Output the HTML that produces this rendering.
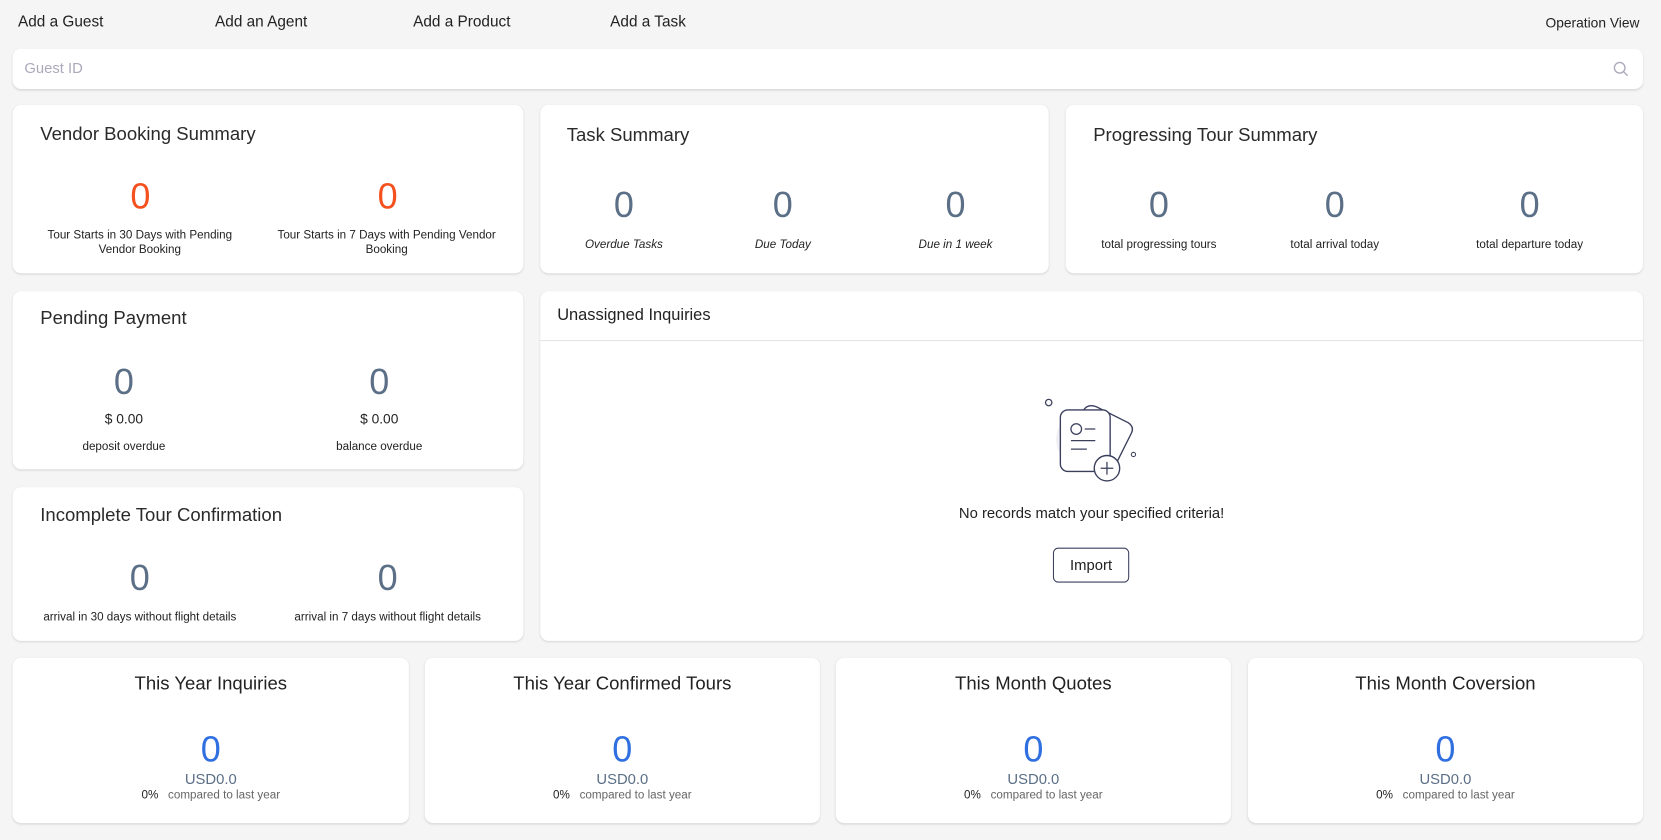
<!DOCTYPE html>
<html><head><meta charset="utf-8"><style>
html,body{margin:0;padding:0;background:#f5f5f6;overflow:hidden;width:1661px;height:840px}
#w{position:absolute;left:0;top:0;width:1568px;height:793px;transform:scale(1.0593);transform-origin:0 0;font-family:"Liberation Sans",sans-serif;color:#222}
.a{position:absolute;white-space:nowrap}
.c{position:absolute;background:#fff;border-radius:8px;box-shadow:0 1px 2px rgba(0,0,0,.12)}
.t{position:absolute;font-size:17.5px;color:#2a2a2a}
.n{position:absolute;text-align:center;font-size:34px;color:#5b6f86}
.l{position:absolute;text-align:center;font-size:11px;color:#222;line-height:14px}
.nav{font-size:14.5px;top:13px;color:#222}
</style></head><body><div id="w">
<div class="a nav" style="left:17px">Add a Guest</div>
<div class="a nav" style="left:203px">Add an Agent</div>
<div class="a nav" style="left:390px">Add a Product</div>
<div class="a nav" style="left:576px">Add a Task</div>
<div class="a" style="left:1459px;top:14px;font-size:13px">Operation View</div>
<div class="c" style="left:12px;top:46px;width:1539px;height:38px">
<div class="a" style="left:11px;top:10px;font-size:14px;color:#aab">Guest ID</div>
<svg class="a" style="left:1510px;top:11px" width="16" height="16" viewBox="0 0 16 16"><circle cx="7" cy="7" r="5" fill="none" stroke="#aab" stroke-width="1.3"/><path d="M11 11l3.5 3.5" stroke="#aab" stroke-width="1.3"/></svg>
</div>

<div class="c" style="left:12px;top:99px;width:482px;height:159px">
<div class="t" style="left:26px;top:17px">Vendor Booking Summary</div>
<div class="n" style="left:0;width:241px;top:68px;color:#f4511e">0</div>
<div class="n" style="left:241px;width:226px;top:68px;color:#f4511e">0</div>
<div class="l" style="left:25px;width:190px;top:116px">Tour Starts in 30 Days with Pending Vendor Booking</div>
<div class="l" style="left:245px;width:216px;top:116px">Tour Starts in 7 Days with Pending Vendor Booking</div>
</div>
<div class="c" style="left:510px;top:99px;width:480px;height:159px">
<div class="t" style="left:25px;top:18px">Task Summary</div>
<div class="n" style="left:29px;width:100px;top:76px">0</div>
<div class="n" style="left:179px;width:100px;top:76px">0</div>
<div class="n" style="left:342px;width:100px;top:76px">0</div>
<div class="l" style="left:29px;width:100px;top:125px;font-style:italic">Overdue Tasks</div>
<div class="l" style="left:179px;width:100px;top:125px;font-style:italic">Due Today</div>
<div class="l" style="left:342px;width:100px;top:125px;font-style:italic">Due in 1 week</div>
</div>
<div class="c" style="left:1006px;top:99px;width:545px;height:159px">
<div class="t" style="left:26px;top:18px">Progressing Tour Summary</div>
<div class="n" style="left:38px;width:100px;top:76px">0</div>
<div class="n" style="left:204px;width:100px;top:76px">0</div>
<div class="n" style="left:388px;width:100px;top:76px">0</div>
<div class="l" style="left:18px;width:140px;top:125px">total progressing tours</div>
<div class="l" style="left:184px;width:140px;top:125px">total arrival today</div>
<div class="l" style="left:368px;width:140px;top:125px">total departure today</div>
</div>

<div class="c" style="left:12px;top:275px;width:482px;height:168px">
<div class="t" style="left:26px;top:15px">Pending Payment</div>
<div class="n" style="left:55px;width:100px;top:67px">0</div>
<div class="n" style="left:296px;width:100px;top:67px">0</div>
<div class="l" style="left:55px;width:100px;top:114px;font-size:13px">$ 0.00</div>
<div class="l" style="left:296px;width:100px;top:114px;font-size:13px">$ 0.00</div>
<div class="l" style="left:45px;width:120px;top:140px">deposit overdue</div>
<div class="l" style="left:286px;width:120px;top:140px">balance overdue</div>
</div>
<div class="c" style="left:12px;top:460px;width:482px;height:145px">
<div class="t" style="left:26px;top:16px">Incomplete Tour Confirmation</div>
<div class="n" style="left:70px;width:100px;top:67px">0</div>
<div class="n" style="left:304px;width:100px;top:67px">0</div>
<div class="l" style="left:0;width:240px;top:116px">arrival in 30 days without flight details</div>
<div class="l" style="left:234px;width:240px;top:116px">arrival in 7 days without flight details</div>
</div>
<div class="c" style="left:510px;top:275px;width:1041px;height:330px">
<div class="a" style="left:16px;top:14px;font-size:15.5px">Unassigned Inquiries</div>
<div class="a" style="left:0;top:46px;width:1041px;height:1px;background:#e4e4e8"></div>
<svg class="a" style="left:475px;top:100px" width="100" height="85" viewBox="0 0 100 85">
<circle cx="38" cy="40" r="26" fill="#f0f0f5"/>
<circle cx="5" cy="5" r="3" fill="none" stroke="#3a3f5c" stroke-width="1.2"/>
<circle cx="85" cy="54" r="2" fill="none" stroke="#3a3f5c" stroke-width="1"/>
<path d="M38 12 Q42 6 50 9 L80 24 Q86 28 83 34 L65 70" fill="none" stroke="#3a3f5c" stroke-width="1.3"/>
<rect x="16" y="12" width="47" height="58" rx="7" fill="#fff" stroke="#3a3f5c" stroke-width="1.3"/>
<circle cx="31" cy="30" r="5" fill="none" stroke="#3a3f5c" stroke-width="1.2"/>
<path d="M39 30h10M26 41h23M26 49h15" stroke="#3a3f5c" stroke-width="1.2"/>
<circle cx="60" cy="67" r="12" fill="#fff" stroke="#3a3f5c" stroke-width="1.3"/>
<path d="M60 61v12M54 67h12" stroke="#3a3f5c" stroke-width="1.2"/>
</svg>
<div class="a" style="left:0;width:1041px;text-align:center;top:201px;font-size:14px">No records match your specified criteria!</div>
<div class="a" style="left:484px;top:242px;width:70px;height:31px;border:1px solid #3a3f5c;border-radius:5px;text-align:center;line-height:31px;font-size:14px">Import</div>
</div>

<div class="c" style="left:12px;top:621px;width:374px;height:156px">
<div class="a" style="left:0;width:374px;text-align:center;top:14px;font-size:17.5px">This Year Inquiries</div>
<div class="n" style="left:0;width:374px;top:68px;color:#2f6fe0">0</div>
<div class="a" style="left:0;width:374px;text-align:center;top:106px;font-size:14px;color:#5b6f86">USD0.0</div>
<div class="a" style="left:0;width:374px;text-align:center;top:124px;font-size:11px;color:#666"><span style="color:#222">0%</span>&nbsp;&nbsp; compared to last year</div>
</div>
<div class="c" style="left:401px;top:621px;width:373px;height:156px">
<div class="a" style="left:0;width:373px;text-align:center;top:14px;font-size:17.5px">This Year Confirmed Tours</div>
<div class="n" style="left:0;width:373px;top:68px;color:#2f6fe0">0</div>
<div class="a" style="left:0;width:373px;text-align:center;top:106px;font-size:14px;color:#5b6f86">USD0.0</div>
<div class="a" style="left:0;width:373px;text-align:center;top:124px;font-size:11px;color:#666"><span style="color:#222">0%</span>&nbsp;&nbsp; compared to last year</div>
</div>
<div class="c" style="left:789px;top:621px;width:373px;height:156px">
<div class="a" style="left:0;width:373px;text-align:center;top:14px;font-size:17.5px">This Month Quotes</div>
<div class="n" style="left:0;width:373px;top:68px;color:#2f6fe0">0</div>
<div class="a" style="left:0;width:373px;text-align:center;top:106px;font-size:14px;color:#5b6f86">USD0.0</div>
<div class="a" style="left:0;width:373px;text-align:center;top:124px;font-size:11px;color:#666"><span style="color:#222">0%</span>&nbsp;&nbsp; compared to last year</div>
</div>
<div class="c" style="left:1178px;top:621px;width:373px;height:156px">
<div class="a" style="left:0;width:373px;text-align:center;top:14px;font-size:17.5px">This Month Coversion</div>
<div class="n" style="left:0;width:373px;top:68px;color:#2f6fe0">0</div>
<div class="a" style="left:0;width:373px;text-align:center;top:106px;font-size:14px;color:#5b6f86">USD0.0</div>
<div class="a" style="left:0;width:373px;text-align:center;top:124px;font-size:11px;color:#666"><span style="color:#222">0%</span>&nbsp;&nbsp; compared to last year</div>
</div>
</div></body></html>
